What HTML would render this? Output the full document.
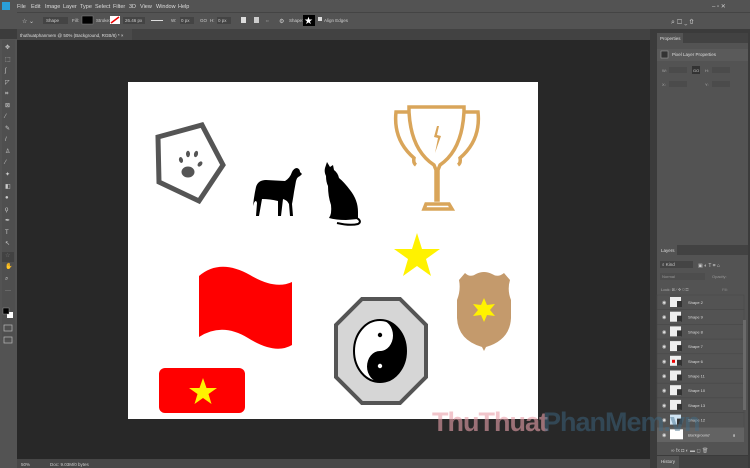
<!DOCTYPE html>
<html><head><meta charset="utf-8">
<style>
html,body{margin:0;padding:0;width:750px;height:468px;overflow:hidden;background:#282828;font-family:"Liberation Sans",sans-serif}
svg{display:block}
text{font-family:"Liberation Sans",sans-serif}
</style></head><body>
<svg width="750" height="468" viewBox="0 0 750 468" xmlns="http://www.w3.org/2000/svg">
<rect x="0" y="0" width="750" height="12" fill="#535353"/>
<rect x="2" y="2" width="8" height="8" fill="#2a9fd8"/>
<g font-size="5.5" fill="#ddd">
<text x="17" y="8">File</text><text x="31" y="8">Edit</text><text x="45" y="8">Image</text><text x="63" y="8">Layer</text><text x="80" y="8">Type</text><text x="95" y="8">Select</text><text x="113" y="8">Filter</text><text x="129" y="8">3D</text><text x="140" y="8">View</text><text x="156" y="8">Window</text><text x="178" y="8">Help</text>
</g>
<text x="712" y="8" font-size="6" fill="#ccc">–  ▫  ✕</text>
<rect x="0" y="12" width="750" height="17" fill="#535353"/>
<line x1="0" y1="12.5" x2="750" y2="12.5" stroke="#444"/>
<g font-size="4.5" fill="#ccc">
<text x="8" y="23" font-size="7">⌂</text>
<text x="22" y="23" font-size="6">☆ ⌄</text>
<rect x="43" y="17" width="25" height="7" fill="#444"/><text x="46" y="22">Shape</text>
<text x="72" y="22">Fill:</text><rect x="82" y="16" width="11" height="8" fill="#000" stroke="#888" stroke-width=".5"/>
<text x="96" y="22">Stroke:</text><rect x="110" y="16" width="10" height="8" fill="#fff"/><path d="M111 23L119 17" stroke="#e00" stroke-width="1.5"/>
<rect x="123" y="17" width="22" height="7" fill="#444"/><text x="125" y="22">26.46 px</text>
<path d="M151 20.5H163" stroke="#ddd"/>
<text x="171" y="22">W:</text><rect x="180" y="17" width="14" height="7" fill="#444"/><text x="181" y="22">0 px</text>
<text x="200" y="22">GO</text><text x="210" y="22">H:</text><rect x="217" y="17" width="14" height="7" fill="#444"/><text x="218" y="22">0 px</text>
<rect x="241" y="17" width="5" height="6" fill="#ddd"/>
<rect x="254" y="17" width="5" height="6" fill="#ccc"/>
<text x="265" y="22">⇔</text>
<text x="279" y="23" font-size="6">⚙</text>
<text x="289" y="22">Shape:</text>
<rect x="303" y="15" width="12" height="11" fill="#000"/><text x="304" y="24" font-size="10" fill="#fff">★</text>
<rect x="318" y="17" width="4" height="4" fill="#ddd"/>
<text x="324" y="22">Align Edges</text>
<text x="671" y="24" font-size="7">⌕ ▢ ⌄ ⇧</text>
</g>
<rect x="17" y="29" width="633" height="11" fill="#424242"/>
<rect x="17" y="29" width="115" height="11" fill="#4a4a4a"/>
<text x="20" y="37" font-size="4.5" fill="#ddd">thuthuatphanmem @ 50% (Background, RGB/8) *   ×</text>
<rect x="0" y="12" width="17" height="456" fill="#535353"/>
<rect x="0" y="29" width="17" height="10" fill="#3c3c3c"/>
<rect x="2" y="40" width="13" height="300" fill="#4f4f4f"/>
<g fill="#ccc" font-size="6">
<text x="5" y="49">✥</text><text x="5" y="61">⬚</text><text x="5" y="72">ʃ</text><text x="5" y="84">◸</text><text x="5" y="95">⌗</text><text x="5" y="107">⊠</text><text x="5" y="118">⁄</text><text x="5" y="130">✎</text><text x="5" y="141">/</text><text x="5" y="153">♙</text><text x="5" y="164">⁄</text><text x="5" y="176">✦</text><text x="5" y="188">◧</text><text x="5" y="199">●</text><text x="5" y="211">ϙ</text><text x="5" y="222">✒</text><text x="5" y="234">T</text><text x="5" y="245">↖</text><text x="5" y="257">☆</text><text x="5" y="268">✋</text><text x="5" y="280">⌕</text><text x="5" y="292">···</text>
</g>
<rect x="2" y="252" width="12" height="10" fill="#3a3a3a" opacity=".6"/>
<rect x="7" y="312" width="6" height="6" fill="#fff"/>
<rect x="3" y="308" width="6" height="6" fill="#000" stroke="#aaa" stroke-width=".4"/>
<rect x="4" y="325" width="8" height="6" fill="none" stroke="#bbb" stroke-width=".7"/>
<rect x="4" y="337" width="8" height="6" fill="none" stroke="#bbb" stroke-width=".7"/>
<rect x="17" y="459" width="633" height="9" fill="#474747"/>
<text x="21" y="466" font-size="4.5" fill="#ccc">50%</text>
<text x="50" y="466" font-size="4.5" fill="#ccc">Doc: 9.03M/0 bytes</text>
<rect x="650" y="29" width="100" height="439" fill="#3b3b3b"/>
<rect x="657" y="33" width="91" height="212" fill="#535353"/>
<rect x="657" y="33" width="91" height="10" fill="#424242"/>
<rect x="657" y="33" width="26" height="10" fill="#535353"/>
<text x="660" y="40" font-size="4.5" fill="#ddd">Properties</text>
<rect x="657" y="49" width="91" height="12" fill="#5a5a5a"/>
<rect x="661" y="51" width="7" height="7" fill="#333" stroke="#aaa" stroke-width=".5"/>
<text x="672" y="56" font-size="4.5" fill="#ddd">Pixel Layer Properties</text>
<g font-size="4" fill="#aaa">
<text x="662" y="72">W:</text><rect x="669" y="67" width="18" height="6" fill="#4b4b4b"/>
<rect x="692" y="66" width="8" height="8" fill="#333"/><text x="693" y="72" fill="#ccc">GO</text>
<text x="705" y="72">H:</text><rect x="712" y="67" width="18" height="6" fill="#4b4b4b"/>
<text x="662" y="86">X:</text><rect x="669" y="81" width="18" height="6" fill="#4b4b4b"/>
<text x="705" y="86">Y:</text><rect x="712" y="81" width="18" height="6" fill="#4b4b4b"/>
</g>
<rect x="657" y="245" width="91" height="210" fill="#535353"/>
<rect x="657" y="245" width="91" height="10" fill="#424242"/>
<rect x="657" y="245" width="20" height="10" fill="#535353"/>
<text x="661" y="252" font-size="4.5" fill="#ddd">Layers</text>
<rect x="660" y="261" width="33" height="7" fill="#444"/>
<text x="662" y="266" font-size="4.5" fill="#ccc">⌕ Kind</text>
<text x="698" y="267" font-size="5" fill="#ccc">▣ ◐ T ⌗ ⌂</text>
<rect x="660" y="273" width="45" height="7" fill="#4d4d4d"/>
<text x="662" y="278" font-size="4" fill="#999">Normal</text>
<text x="712" y="278" font-size="4" fill="#999">Opacity:</text>
<text x="661" y="291" font-size="4" fill="#aaa">Lock: ⊠ ⁄ ✥ ⌑ ⚿</text>
<text x="722" y="291" font-size="4" fill="#888">Fill:</text>
<g font-size="4" fill="#ddd">
<g transform="translate(0,295)"><rect x="657" y="0" width="87" height="14.7" fill="#535353" stroke="#474747" stroke-width=".5"/><text x="662" y="9" font-size="5">◉</text><rect x="670" y="2" width="11" height="10" fill="#eee"/><rect x="677" y="6" width="5" height="6" fill="#333"/><text x="688" y="9">Shape 2</text></g>
<g transform="translate(0,309.7)"><rect x="657" y="0" width="87" height="14.7" fill="#535353" stroke="#474747" stroke-width=".5"/><text x="662" y="9" font-size="5">◉</text><rect x="670" y="2" width="11" height="10" fill="#eee"/><rect x="677" y="6" width="5" height="6" fill="#333"/><text x="688" y="9">Shape 9</text></g>
<g transform="translate(0,324.4)"><rect x="657" y="0" width="87" height="14.7" fill="#535353" stroke="#474747" stroke-width=".5"/><text x="662" y="9" font-size="5">◉</text><rect x="670" y="2" width="11" height="10" fill="#eee"/><rect x="677" y="6" width="5" height="6" fill="#333"/><text x="688" y="9">Shape 8</text></g>
<g transform="translate(0,339.1)"><rect x="657" y="0" width="87" height="14.7" fill="#535353" stroke="#474747" stroke-width=".5"/><text x="662" y="9" font-size="5">◉</text><rect x="670" y="2" width="11" height="10" fill="#eee"/><rect x="677" y="6" width="5" height="6" fill="#333"/><text x="688" y="9">Shape 7</text></g>
<g transform="translate(0,353.8)"><rect x="657" y="0" width="87" height="14.7" fill="#535353" stroke="#474747" stroke-width=".5"/><text x="662" y="9" font-size="5">◉</text><rect x="670" y="2" width="11" height="10" fill="#eee"/><rect x="672" y="6" width="3" height="3" fill="#e00"/><rect x="677" y="6" width="5" height="6" fill="#333"/><text x="688" y="9">Shape 6</text></g>
<g transform="translate(0,368.5)"><rect x="657" y="0" width="87" height="14.7" fill="#535353" stroke="#474747" stroke-width=".5"/><text x="662" y="9" font-size="5">◉</text><rect x="670" y="2" width="11" height="10" fill="#eee"/><rect x="677" y="6" width="5" height="6" fill="#333"/><text x="688" y="9">Shape 11</text></g>
<g transform="translate(0,383.2)"><rect x="657" y="0" width="87" height="14.7" fill="#535353" stroke="#474747" stroke-width=".5"/><text x="662" y="9" font-size="5">◉</text><rect x="670" y="2" width="11" height="10" fill="#eee"/><rect x="677" y="6" width="5" height="6" fill="#333"/><text x="688" y="9">Shape 10</text></g>
<g transform="translate(0,397.9)"><rect x="657" y="0" width="87" height="14.7" fill="#535353" stroke="#474747" stroke-width=".5"/><text x="662" y="9" font-size="5">◉</text><rect x="670" y="2" width="11" height="10" fill="#eee"/><rect x="677" y="6" width="5" height="6" fill="#333"/><text x="688" y="9">Shape 13</text></g>
<g transform="translate(0,412.6)"><rect x="657" y="0" width="87" height="14.7" fill="#535353" stroke="#474747" stroke-width=".5"/><text x="662" y="9" font-size="5">◉</text><rect x="670" y="2" width="11" height="10" fill="#cfe3f2"/><rect x="677" y="6" width="5" height="6" fill="#333"/><text x="688" y="9">Shape 12</text></g>
<g transform="translate(0,427.3)"><rect x="657" y="0" width="87" height="14.7" fill="#636363"/><text x="662" y="9" font-size="5">◉</text><rect x="670" y="2" width="13" height="10" fill="#fff"/><text x="688" y="9" font-style="italic">Background</text><text x="733" y="9">🔒︎</text></g>
</g>
<rect x="743" y="320" width="3" height="90" fill="#6a6a6a"/>
<text x="671" y="452" font-size="5" fill="#bbb">∞ fx ◘ ◐ ▬ ◻ 🗑︎</text>
<rect x="657" y="456" width="91" height="12" fill="#424242"/>
<rect x="657" y="456" width="22" height="12" fill="#535353"/>
<text x="661" y="463" font-size="4.5" fill="#ddd">History</text>
<rect x="128" y="82" width="410" height="337" fill="#fff"/>
<polygon points="158,137 202,125 223,165 199,201 159,182" fill="none" stroke="#555" stroke-width="5" stroke-linejoin="miter"/>
<g fill="#555">
<ellipse cx="188" cy="172" rx="6.5" ry="5.5"/>
<ellipse cx="181" cy="160" rx="2" ry="3" transform="rotate(-15 181 160)"/>
<ellipse cx="188" cy="154" rx="2" ry="3.2"/>
<ellipse cx="196" cy="154" rx="2" ry="3.2" transform="rotate(15 196 154)"/>
<ellipse cx="200" cy="164" rx="2" ry="3" transform="rotate(40 200 164)"/>
</g>
<path d="M256,187 Q258,180 266,180 L285,181 Q290,178 292,172 Q294,168 297,168 Q300,169 300,172 L302,174 L300,176 Q297,177 296,181 L294,192 Q293,199 292,204 L293,216 L290,216 L289,204 Q287,200 283,199 L281,216 L278,216 L278,201 Q270,199 262,199 L259,216 L256,216 L257,203 Q256,199 254,203 L253,206 Q254,196 256,187 Z" fill="#000"/>
<path d="M327,162 L330,167 L333,165 L334,170 Q338,173 339,178 Q344,182 350,190 Q358,200 358,212 L358,219 L346,220 Q336,220 329,218 Q332,214 331,205 Q328,196 328,186 Q326,182 326,176 Q324,172 325,168 Z" fill="#000"/>
<path d="M355,217 Q363,221 358,224 Q350,226 337,223" fill="none" stroke="#000" stroke-width="2"/>
<g fill="none" stroke="#d9a55a" stroke-width="3.5">
<path d="M409,107 H464 V112 Q462,150 440,165 L438,170 V200 H436 V170 L434,165 Q411,150 409,112 Z"/>
<path d="M409,112 H396 Q393,140 414,158 Q413,163 416,165"/>
<path d="M464,112 H478 Q481,140 460,158 Q461,163 458,165"/>
<path d="M426,204 H449 L452,209 H424 Z"/>
</g>
<path d="M437,126 L434,137 L438,138 L435,153 L441,136 L437,135 L439,126" fill="#d9a55a"/>
<polygon points="417,233 422,249 440,249 426,259 431,276 417,266 403,276 408,259 394,249 412,249" fill="#fff200"/>
<path d="M199,276 Q220,258 250,275 Q275,290 292,282 L292,345 Q275,355 248,338 Q222,322 199,337 Z" fill="#f00"/>
<polygon points="362,299 400,299 426,325 426,377 400,403 362,403 336,377 336,325" fill="#d6d6d6" stroke="#555" stroke-width="4"/>
<ellipse cx="380" cy="351" rx="26" ry="31" fill="#fff" stroke="#000" stroke-width="2"/>
<path d="M380,320 A26,31 0 0 1 380,382 A13,15.5 0 0 1 380,351 A13,15.5 0 0 0 380,320 Z" fill="#000"/>
<circle cx="380" cy="335" r="2.2" fill="#000"/>
<circle cx="380" cy="366" r="2.2" fill="#fff"/>
<path d="M459,280 L465,273 Q470,278 476,274 Q484,270 492,274 Q498,278 504,273 L510,280 Q507,290 511,300 L511,318 Q510,340 486,347 L484,351 L482,347 Q458,340 457,318 L457,300 Q461,290 459,280 Z" fill="#c49a6c"/>
<polygon points="484,298 487,305 495,304 490,310 495,316 487,315 484,322 481,315 473,316 478,310 473,304 481,305" fill="#fff200"/>
<rect x="159" y="368" width="86" height="45" rx="6" fill="#f00"/>
<polygon points="203,378 206.5,388 217,388 208.5,394 211.5,404 203,398 194.5,404 197.5,394 189,388 199.5,388" fill="#fff200"/>
<text x="432" y="431" font-size="27" font-weight="bold" fill="#e8a0aa" opacity=".6" letter-spacing="-1">ThuThuat</text>
<text x="543" y="431" font-size="27" font-weight="bold" fill="#3f6e8c" opacity=".45" letter-spacing="-1">PhanMem.vn</text>
</svg>
</body></html>
